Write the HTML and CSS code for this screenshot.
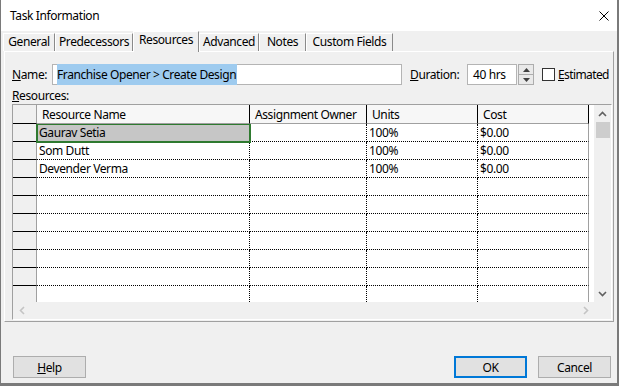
FILE: index.html
```html
<!DOCTYPE html>
<html lang="en">

<head>
    <meta charset="UTF-8">
    <meta name="viewport" content="width=device-width, initial-scale=1.0">
    <title>Task Information</title>
    <link rel="stylesheet" href="styles.css">
</head>

<body>
    <div class="dialog">
        <!-- Title Bar -->
        <div class="titlebar">
            <span class="title">Task Information</span>
            <svg class="close" width="10" height="10" viewBox="0 0 10 10">
                <path d="M0.5 0.5L9.5 9.5M9.5 0.5L0.5 9.5" stroke="#000" stroke-width="1" fill="none" />
            </svg>
        </div>

        <!-- Tabs -->
        <div class="tabs">
            <div class="tab tab-general">General</div>
            <div class="tab tab-pred">Predecessors</div>
            <div class="tab tab-res active">Resources</div>
            <div class="tab tab-adv">Advanced</div>
            <div class="tab tab-notes">Notes</div>
            <div class="tab tab-custom">Custom Fields</div>
        </div>

        <div class="panel">
            <div class="name-row">
                <span class="name-lbl"><u>N</u>ame:</span>
                <div class="textbox name-box"><span class="selected-text">Franchise Opener &gt; Create Design</span></div>
                <span class="dur-lbl"><u>D</u>uration:</span>
                <div class="textbox dur-box">40 hrs</div>
                <div class="spinner">
                    <div class="spin-btn">
                        <svg width="7" height="4" viewBox="0 0 7 4"><path d="M0 4L3.5 0L7 4Z" fill="#404040" /></svg>
                    </div>
                    <div class="spin-btn">
                        <svg width="7" height="4" viewBox="0 0 7 4"><path d="M0 0L3.5 4L7 0Z" fill="#404040" /></svg>
                    </div>
                </div>
                <span class="checkbox"></span>
                <span class="check-lbl"><u>E</u>stimated</span>
            </div>

            <div class="res-lbl"><u>R</u>esources:</div>

            <!-- Resources Grid -->
            <div class="grid">
                <div class="grid-main">
                    <div class="sheet">
                        <div class="grid-row head">
                            <div class="rh"></div>
                            <div class="hc">Resource Name</div>
                            <div class="hc">Assignment Owner</div>
                            <div class="hc">Units</div>
                            <div class="hc last">Cost</div>
                        </div>
                        <div class="grid-body">
                            <div class="grid-row">
                                <div class="rh"></div>
                                <div class="cell current">Gaurav Setia</div>
                                <div class="cell"></div>
                                <div class="cell">100%</div>
                                <div class="cell last">$0.00</div>
                            </div>
                            <div class="grid-row">
                                <div class="rh"></div>
                                <div class="cell">Som Dutt</div>
                                <div class="cell"></div>
                                <div class="cell">100%</div>
                                <div class="cell last">$0.00</div>
                            </div>
                            <div class="grid-row">
                                <div class="rh"></div>
                                <div class="cell">Devender Verma</div>
                                <div class="cell"></div>
                                <div class="cell">100%</div>
                                <div class="cell last">$0.00</div>
                            </div>
                            <div class="grid-row"><div class="rh"></div><div class="cell"></div><div class="cell"></div><div class="cell"></div><div class="cell last"></div></div>
                            <div class="grid-row"><div class="rh"></div><div class="cell"></div><div class="cell"></div><div class="cell"></div><div class="cell last"></div></div>
                            <div class="grid-row"><div class="rh"></div><div class="cell"></div><div class="cell"></div><div class="cell"></div><div class="cell last"></div></div>
                            <div class="grid-row"><div class="rh"></div><div class="cell"></div><div class="cell"></div><div class="cell"></div><div class="cell last"></div></div>
                            <div class="grid-row"><div class="rh"></div><div class="cell"></div><div class="cell"></div><div class="cell"></div><div class="cell last"></div></div>
                            <div class="grid-row"><div class="rh"></div><div class="cell"></div><div class="cell"></div><div class="cell"></div><div class="cell last"></div></div>
                            <div class="grid-row"><div class="rh"></div><div class="cell"></div><div class="cell"></div><div class="cell"></div><div class="cell last"></div></div>
                        </div>
                    </div>
                    <div class="vscroll">
                        <div class="sb-btn">
                            <svg width="9" height="6" viewBox="0 0 9 6"><path d="M1 5L4.5 1.5L8 5" stroke="#606060" stroke-width="1.6" fill="none" /></svg>
                        </div>
                        <div class="thumb"></div>
                        <div class="sb-fill"></div>
                        <div class="sb-btn">
                            <svg width="9" height="6" viewBox="0 0 9 6"><path d="M1 1L4.5 4.5L8 1" stroke="#606060" stroke-width="1.6" fill="none" /></svg>
                        </div>
                    </div>
                </div>
                <div class="hscroll">
                    <div class="sb-btn">
                        <svg width="6" height="9" viewBox="0 0 6 9"><path d="M5 1L1.5 4.5L5 8" stroke="#c4c4c4" stroke-width="1.6" fill="none" /></svg>
                    </div>
                    <div class="sb-fill"></div>
                    <div class="sb-btn">
                        <svg width="6" height="9" viewBox="0 0 6 9"><path d="M1 1L4.5 4.5L1 8" stroke="#c4c4c4" stroke-width="1.6" fill="none" /></svg>
                    </div>
                    <div class="corner"></div>
                </div>
            </div>
        </div>

        <!-- Buttons -->
        <div class="buttons">
            <button class="btn"><u>H</u>elp</button>
            <span class="spacer"></span>
            <button class="btn default">OK</button>
            <button class="btn">Cancel</button>
        </div>
    </div>
</body>

</html>
```

FILE: styles.css
```css
/* styles.css */
body {
    margin: 0;
    font-family: "Noto Sans", "Open Sans", sans-serif;
    font-size: 12px;
    letter-spacing: -0.4px;
    color: #000;
    background-color: #f0f0f0;
}

.dialog {
    width: 619px;
    height: 386px;
    box-sizing: border-box;
    background-color: #f0f0f0;
    border-left: 1px solid #7a7a7a;
    border-right: 2px solid #7a7a7a;
    border-bottom: 3px solid #7a7a7a;
    display: flex;
    flex-direction: column;
}

/* title bar */
.titlebar {
    height: 31px;
    flex: none;
    background-color: #fff;
    display: flex;
    align-items: center;
    justify-content: space-between;
    padding: 0 8px 0 9px;
}

/* tabs */
.tabs {
    height: 20px;
    flex: none;
    display: flex;
    align-items: flex-end;
    padding-left: 2px;
}

.tab {
    height: 18px;
    box-sizing: border-box;
    text-align: center;
    line-height: 16px;
    white-space: nowrap;
    border-top: 1px solid #fff;
    border-left: 1px solid #fff;
    border-right: 1px solid #8a8a8a;
}

.tab-general { width: 52px; }
.tab-pred { width: 78px; }
.tab-res { width: 66px; }
.tab-adv { width: 60px; }
.tab-notes { width: 47px; }
.tab-custom { width: 87px; }

.tab.active {
    height: 21px;
    margin-bottom: -1px;
    padding-bottom: 3px;
    position: relative;
    z-index: 1;
    background-color: #f0f0f0;
}

.panel {
    height: 271px;
    box-sizing: border-box;
    flex: none;
    margin: 0 3px;
    padding: 12px 0 0 7px;
    border-top: 1px solid #fff;
    border-left: 1px solid #fff;
    border-right: 1px solid #a0a0a0;
    border-bottom: 1px solid #a0a0a0;
}

/* name / duration row */
.name-row {
    height: 21px;
    display: flex;
    align-items: center;
}

.name-lbl {
    width: 40px;
}

.textbox {
    height: 21px;
    box-sizing: border-box;
    border: 1px solid #b4b4b4;
    background-color: #fff;
    line-height: 19px;
}

.name-box {
    width: 350px;
    padding-left: 4px;
}

.selected-text {
    background-color: #9ecbef;
    padding: 2px 1px 2px 0;
}

.dur-lbl {
    width: 57px;
    margin-left: 8px;
}

.dur-box {
    width: 50px;
    padding-left: 5px;
}

.spinner {
    width: 16px;
    height: 21px;
    margin-left: 1px;
    box-sizing: border-box;
    border: 1px solid #adadad;
    display: flex;
    flex-direction: column;
    background-color: #e9e9e9;
}

.spin-btn {
    flex: 1;
    display: flex;
    align-items: center;
    justify-content: center;
}

.spin-btn + .spin-btn {
    border-top: 1px solid #adadad;
}

.checkbox {
    width: 13px;
    height: 13px;
    box-sizing: border-box;
    margin-left: 8px;
    border: 1px solid #333;
    background-color: #fff;
}

.check-lbl {
    margin-left: 3px;
    letter-spacing: -0.6px;
}

.res-lbl {
    margin-top: 3px;
    line-height: 16px;
}

/* grid */
.grid {
    width: 600px;
    box-sizing: border-box;
    border-top: 1px solid #a0a0a0;
    border-left: 1px solid #a0a0a0;
    border-right: 1px solid #fff;
    border-bottom: 1px solid #fff;
}

.grid-main {
    display: flex;
    height: 197px;
}

.sheet {
    width: 581px;
    background-color: #fff;
}

.grid-row {
    display: grid;
    grid-template-columns: 24px 213px 117px 111px 111px;
    height: 18px;
}

.grid-row.head {
    height: 19px;
}

.grid-body {
    height: 178px;
    overflow: hidden;
}

.rh {
    background-color: #f0f0f0;
    border-right: 1px solid #a0a0a0;
    border-bottom: 1px solid #000;
}

.hc {
    background-color: #f7f7f7;
    padding: 1px 0 0 5px;
    line-height: 17px;
    border-right: 1px solid #000;
    border-bottom: 1px solid #a0a0a0;
    white-space: nowrap;
}

.cell {
    padding-left: 2px;
    line-height: 17px;
    border-right: 1px dotted #000;
    border-bottom: 1px dotted #000;
    white-space: nowrap;
}

.cell.last {
    border-right: 1px solid #a0a0a0;
}

.cell.current {
    background-color: #c6c6c6;
    outline: 2px solid #2f7a30;
    outline-offset: -1px;
    position: relative;
    z-index: 1;
}

/* scroll bars */
.vscroll {
    width: 17px;
    display: flex;
    flex-direction: column;
    background-color: #f0f0f0;
}

.sb-btn {
    width: 17px;
    height: 17px;
    flex: none;
    display: flex;
    align-items: center;
    justify-content: center;
}

.thumb {
    height: 16px;
    margin: 0 1px 0 2px;
    background-color: #cdcdcd;
}

.sb-fill {
    flex: 1;
}

.hscroll {
    height: 17px;
    display: flex;
    background-color: #f0f0f0;
}

.corner {
    width: 17px;
}

/* buttons */
.buttons {
    margin-top: auto;
    display: flex;
    gap: 11px;
    padding: 0 6px 5px 12px;
}

.spacer {
    flex: 1;
}

.btn {
    width: 73px;
    height: 22px;
    padding: 0;
    font-family: inherit;
    font-size: 12px;
    letter-spacing: inherit;
    color: #000;
    background-color: #e1e1e1;
    border: 1px solid #adadad;
}

.btn.default {
    border: 2px solid #0078d7;
}
```
